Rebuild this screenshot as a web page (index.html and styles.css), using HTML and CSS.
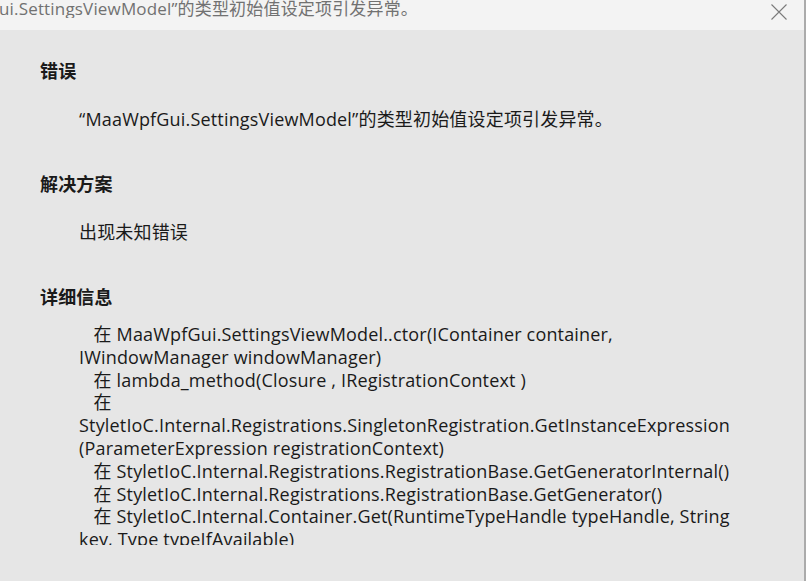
FILE: index.html
```html
<!DOCTYPE html>
<html lang="zh-CN">

<head>
  <meta charset="UTF-8">
  <meta name="viewport" content="width=device-width, initial-scale=1.0">
  <title>异常</title>
  <link rel="stylesheet" href="styles.css">
</head>

<body>
  <div class="window">
    <div class="titlebar">
      <div class="title-clip">
        <span class="title-text">“MaaWpfGui.SettingsViewModel”的类型初始值设定项引发异常。</span>
      </div>
      <button class="close-btn" aria-label="关闭">
        <svg width="16" height="16" viewBox="0 0 16 16">
          <path d="M0.5 0.5 L15.5 15.5 M15.5 0.5 L0.5 15.5" stroke="#7a7a7a" stroke-width="1.1" fill="none" />
        </svg>
      </button>
    </div>

    <div class="content">
      <div class="section">
        <div class="section-title">错误</div>
        <div class="section-body">“MaaWpfGui.SettingsViewModel”的类型初始值设定项引发异常。</div>
      </div>

      <div class="section">
        <div class="section-title">解决方案</div>
        <div class="section-body">出现未知错误</div>
      </div>

      <div class="section details">
        <div class="section-title">详细信息</div>
        <div class="stack">
          <div class="line">   在 MaaWpfGui.SettingsViewModel..ctor(IContainer container,</div>
          <div class="line">IWindowManager windowManager)</div>
          <div class="line">   在 lambda_method(Closure , IRegistrationContext )</div>
          <div class="line">   在</div>
          <div class="line">StyletIoC.Internal.Registrations.SingletonRegistration.GetInstanceExpression</div>
          <div class="line">(ParameterExpression registrationContext)</div>
          <div class="line">   在 StyletIoC.Internal.Registrations.RegistrationBase.GetGeneratorInternal()</div>
          <div class="line">   在 StyletIoC.Internal.Registrations.RegistrationBase.GetGenerator()</div>
          <div class="line">   在 StyletIoC.Internal.Container.Get(RuntimeTypeHandle typeHandle, String</div>
          <div class="line">key, Type typeIfAvailable)</div>
        </div>
      </div>
    </div>
  </div>
</body>

</html>
```

FILE: styles.css
```css
html,
body {
  margin: 0;
  height: 100%;
}

body {
  display: flex;
  background: #ababab;
  font-family: "Open Sans", "Noto Sans CJK SC", sans-serif;
  font-variant-ligatures: none;
  letter-spacing: 0.17px;
  color: #1a1a1a;
  overflow: hidden;
}

.window {
  width: 804px;
  height: 100%;
  display: flex;
  flex-direction: column;
  background: #e6e6e6;
}

.titlebar {
  height: 30px;
  flex: none;
  display: flex;
  align-items: flex-start;
  justify-content: space-between;
  background: #f3f3f3;
}

/* заголовок прокручен влево, видна только правая часть */
.title-clip {
  width: 418px;
  display: flex;
  justify-content: flex-end;
  overflow: hidden;
}

.title-text {
  flex: none;
  white-space: nowrap;
  font-size: 17px;
  line-height: 18px;
  color: #717171;
}

.close-btn {
  margin: 4px 17px 0 0;
  padding: 0;
  border: none;
  background: none;
  width: 16px;
  height: 16px;
}

.close-btn svg {
  display: block;
}

.content {
  flex: 1;
  padding: 29px 0 0 40px;
  overflow: hidden;
}

.section {
  margin-bottom: 41px;
}

.section-title {
  font-weight: bold;
  font-size: 18px;
  line-height: 24px;
}

.section-body {
  margin: 24px 0 0 39px;
  font-size: 18px;
  line-height: 24px;
}

.details {
  margin-bottom: 0;
}

.stack {
  margin: 14px 0 0 39px;
  height: 222px;
  overflow: hidden;
  font-size: 18px;
  line-height: 22.8px;
}

.line {
  white-space: pre;
}
```
